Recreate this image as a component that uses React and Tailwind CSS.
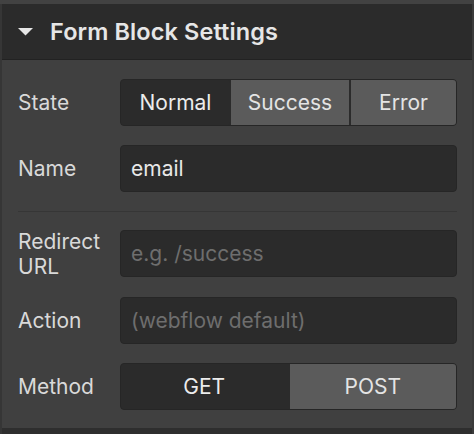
const font = { fontFamily: "Inter, 'Liberation Sans', sans-serif" };

const Row = ({ label, children }) => (
  <div className="flex items-center h-[47px]">
    <div className="w-[102px] shrink-0 text-[21px] leading-[25px] text-[#d9d9d9]">{label}</div>
    <div className="flex-1">{children}</div>
  </div>
);

const Input = ({ value, placeholder }) => (
  <div className="h-[47px] rounded-[4px] border border-[#262626] bg-[#2b2b2b] px-[10px] flex items-center text-[21px]">
    {value ? <span className="text-[#e8e8e8]">{value}</span> : <span className="text-[#6e6e6e]">{placeholder}</span>}
  </div>
);

export default function App() {
  return (
    <div className="w-[474px] h-[434px] bg-[#3b3b3b] flex flex-col" style={font}>
      <div className="h-[4px] bg-[#424242]" />
      <div className="flex flex-1 pr-[2px]">
        <div className="flex-1 flex flex-col border-l-2 border-[#363636]">
          {/* Header */}
          <div className="h-[56px] bg-[#2b2b2b] border-b border-[#222] flex items-center pl-[16px] gap-[17px]">
            <svg width="15" height="8" viewBox="0 0 15 8">
              <path d="M0 0 H15 L7.5 7.5 Z" fill="#e6e6e6" />
            </svg>
            <span className="text-[23.5px] font-semibold text-[#e6e6e6] tracking-[0.1px]">Form Block Settings</span>
          </div>

          {/* Body */}
          <div className="flex-1 bg-[#404040] pl-[16px] pr-[15px] pt-[19px] flex flex-col">
            <Row label="State">
              <div className="flex h-[47px] rounded-[4px] bg-[#2b2b2b] border border-[#262626] text-[21px]">
                <div className="w-[109px] flex items-center justify-center text-[#ececec] rounded-[3px] bg-[#2b2b2b]">Normal</div>
                <div className="w-[118px] ml-[1px] flex items-center justify-center bg-[#5b5b5b] text-[#e4e4e4]">Success</div>
                <div className="flex-1 ml-[2px] flex items-center justify-center bg-[#5b5b5b] text-[#e4e4e4] rounded-r-[3px]">Error</div>
              </div>
            </Row>

            <div className="mt-[19px]">
              <Row label="Name">
                <Input value="email" />
              </Row>
            </div>

            <div className="mt-[19px] h-px bg-[#363636]" />

            <div className="mt-[18px]">
              <Row label={<>Redirect<br />URL</>}>
                <Input placeholder="e.g. /success" />
              </Row>
            </div>

            <div className="mt-[20px]">
              <Row label="Action">
                <Input placeholder="(webflow default)" />
              </Row>
            </div>

            <div className="mt-[19px]">
              <Row label="Method">
                <div className="flex h-[47px] rounded-[4px] bg-[#2b2b2b] border border-[#262626] text-[21px]">
                  <div className="flex-1 flex items-center justify-center text-[#ececec]">GET</div>
                  <div className="flex-1 ml-[2px] flex items-center justify-center bg-[#5b5b5b] text-[#e4e4e4] rounded-r-[3px]">POST</div>
                </div>
              </Row>
            </div>
          </div>
          <div className="h-[6px] bg-[#2e2e2e]" />
        </div>
      </div>
    </div>
  );
}
